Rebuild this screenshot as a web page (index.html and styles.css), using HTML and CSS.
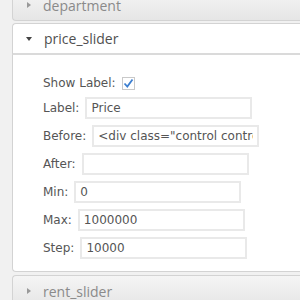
FILE: index.html
```html
<html>
<head>
<meta charset="UTF-8">
<title>Controls</title>
<link rel="stylesheet" href="styles.css">
</head>
<body>
<div class="accordion">
    <div class="panel_header collapsed first">
        <span class="arrow"></span><span class="title">department</span>
    </div>

    <div class="panel_header active">
        <span class="arrow"></span><span class="title">price_slider</span>
    </div>
    <div class="panel_content">
        <div class="field check_field">
            <label>Show Label:</label>
            <span class="checkbox">
                <svg width="11" height="11" viewBox="0 0 11 11"><path d="M1.5 5.5 L4.3 8.5 L9.5 1.5" fill="none" stroke="#3d7fd0" stroke-width="1.8"/></svg>
            </span>
        </div>
        <div class="field">
            <label>Label:</label>
            <input type="text" value="Price">
        </div>
        <div class="field">
            <label>Before:</label>
            <input type="text" value="&lt;div class=&quot;control control-slider&quot;&gt;">
        </div>
        <div class="field">
            <label>After:</label>
            <input type="text" value="">
        </div>
        <div class="field">
            <label>Min:</label>
            <input type="text" value="0">
        </div>
        <div class="field">
            <label>Max:</label>
            <input type="text" value="1000000">
        </div>
        <div class="field">
            <label>Step:</label>
            <input type="text" value="10000">
        </div>
    </div>

    <div class="panel_header collapsed">
        <span class="arrow"></span><span class="title">rent_slider</span>
    </div>
</div>
</body>
</html>
```

FILE: styles.css
```css
body {
    margin: 0;
    background: #f1f1f1;
    font-family: "DejaVu Sans", Verdana, sans-serif;
    color: #555;
    overflow: hidden;
}

* {
    box-sizing: border-box;
}

.accordion {
    margin-left: 12px;
    width: 310px;
}

.panel_header {
    height: 32px;
    display: flex;
    align-items: center;
    padding-left: 13px;
    border: 1px solid #d3d3d3;
    border-right: none;
    border-radius: 4px;
    font-family: "Open Sans", sans-serif;
    font-size: 14px;
    background: linear-gradient(#f5f5f5, #e6e6e6);
    color: #8a8a8a;
}

.panel_header.first {
    margin-top: -11px;
}

.panel_header + .panel_header {
    margin-top: 2px;
}

.panel_content + .panel_header {
    margin-top: 3px;
}

.panel_header .arrow {
    width: 0;
    height: 0;
    margin-right: 12px;
}

.panel_header.collapsed .arrow {
    border-top: 3px solid transparent;
    border-bottom: 3px solid transparent;
    border-left: 4px solid #999;
    margin-left: 1px;
}

.panel_header.active {
    background: #fff;
    color: #505050;
    border-radius: 4px 4px 0 0;
    border-bottom: 2px solid #dadada;
}

.panel_header.active .arrow {
    border-left: 3px solid transparent;
    border-right: 3px solid transparent;
    border-top: 4px solid #444;
}

.panel_content {
    background: #fff;
    border: 1px solid #d3d3d3;
    border-top: none;
    border-right: none;
    border-radius: 0 0 4px 4px;
    padding: 20px 0 12px 30px;
    display: flex;
    flex-direction: column;
    gap: 6px;
}

.field {
    display: flex;
    align-items: center;
    gap: 6px;
    font-size: 12px;
}

.field label {
    color: #555;
}

.check_field {
    height: 16px;
}

.checkbox {
    width: 13px;
    height: 13px;
    border: 1px solid #c9c9c9;
    background: #fff;
    display: flex;
    align-items: center;
    justify-content: center;
}

.field input {
    width: 167px;
    height: 22px;
    border: 2px solid #e9e9e9;
    padding: 0 4px;
    font-family: "DejaVu Sans", Verdana, sans-serif;
    font-size: 12px;
    color: #555;
    outline: none;
}
```
